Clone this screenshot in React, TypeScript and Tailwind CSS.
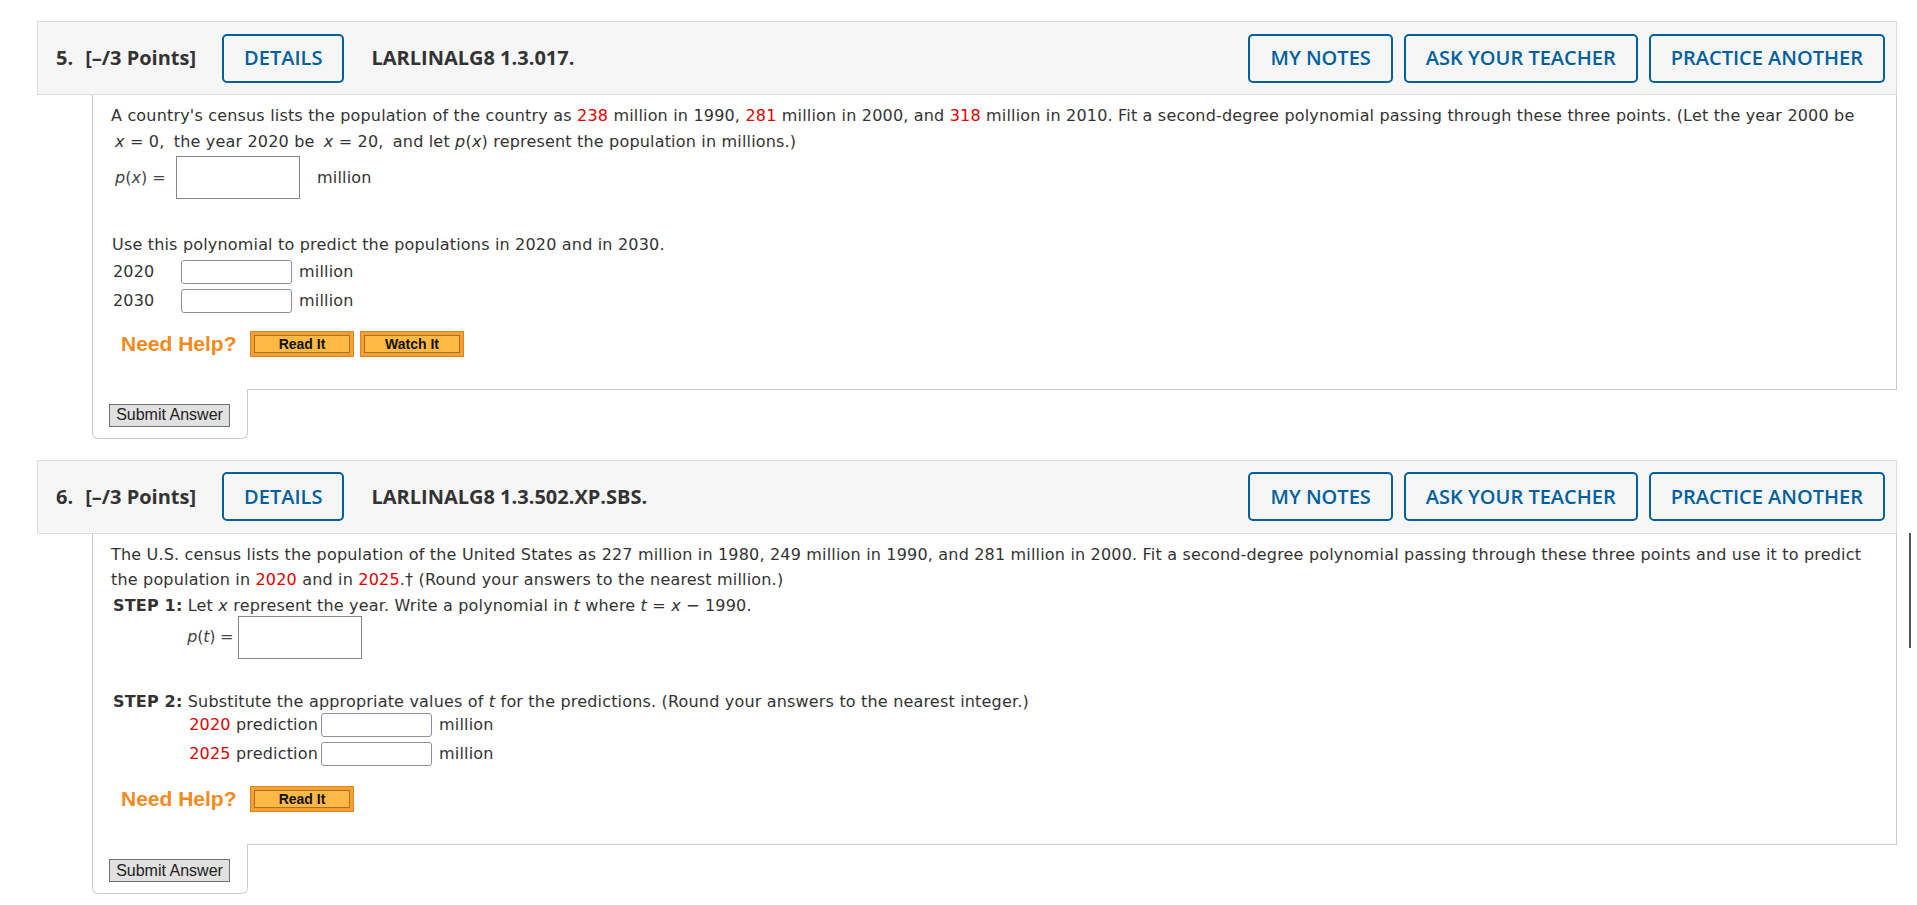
import React from "react";

const RED = "text-[#e00000]";

function HeaderButton({ children }: { children: React.ReactNode }) {
  return (
    <div className="h-[49px] px-[20px] border-2 border-[#00609d] rounded-[5px] flex items-center justify-center text-[#00609d] text-[20px] font-semibold whitespace-nowrap">
      {children}
    </div>
  );
}

function Header({ num, code }: { num: string; code: string }) {
  return (
    <div className="h-[74px] border border-[#dddddd] bg-[#f6f6f6] flex items-center pl-[18px] pr-[11px] font-['Open_Sans',sans-serif] text-[#333333] tracking-normal">
      <span className="text-[20px] font-bold">{num}</span>
      <span className="text-[20px] font-bold ml-[12px]">[–/3 Points]</span>
      <div className="ml-[26px]">
        <HeaderButton>DETAILS</HeaderButton>
      </div>
      <span className="text-[20px] font-bold ml-[27px]">{code}</span>
      <div className="ml-auto flex gap-[11px]">
        <HeaderButton>MY NOTES</HeaderButton>
        <HeaderButton>ASK YOUR TEACHER</HeaderButton>
        <HeaderButton>PRACTICE ANOTHER</HeaderButton>
      </div>
    </div>
  );
}

function HelpButton({ children }: { children: React.ReactNode }) {
  return (
    <div className="w-[104px] h-[26px] bg-[#f5a033] border border-[#de851f] p-[3px]">
      <div className="h-full border border-[#a8702a] bg-[#fdb944] flex items-center justify-center text-[14px] font-bold text-[#111] font-['Liberation_Sans',Arial,sans-serif] leading-none tracking-normal">
        {children}
      </div>
    </div>
  );
}

function NeedHelp({ watch }: { watch?: boolean }) {
  return (
    <div className="flex items-center h-[26px] pl-[10px]">
      <span className="text-[21px] font-bold text-[#f38a1d] font-['Liberation_Sans',Arial,sans-serif] w-[129px] tracking-normal">
        Need Help?
      </span>
      <div className="flex gap-[6px]">
        <HelpButton>Read It</HelpButton>
        {watch && <HelpButton>Watch It</HelpButton>}
      </div>
    </div>
  );
}

function SubmitTab() {
  return (
    <div className="flex">
      <div className="w-[156px] h-[50px] border-x border-b border-[#cccccc] rounded-b-[6px] pl-[16px] pt-[15px]">
        <div className="w-[121px] h-[23px] bg-[#e1e1e1] border border-[#707070] flex items-center justify-center text-[16px] text-[#222] font-['Liberation_Sans',Arial,sans-serif] leading-none tracking-normal">
          Submit Answer
        </div>
      </div>
      <div className="flex-1 border-t border-[#cccccc]" />
    </div>
  );
}

function SmallInput() {
  return <div className="w-[111px] h-[24px] border border-[#8f8f9d] rounded-[3px] bg-white shrink-0" />;
}

function BigInput() {
  return <div className="w-[124px] h-[43px] border border-[#888888] bg-white shrink-0" />;
}

function Math({ children }: { children: React.ReactNode }) {
  return <span className="inline-block px-[4px] whitespace-nowrap">{children}</span>;
}

export default function App() {
  return (
    <div className="min-h-[905px] w-full bg-white relative font-['DejaVu_Sans',Verdana,sans-serif] text-[16px] leading-[25.6px] text-[#333333] tracking-[0.18px]">
      <div className="pt-[21px] pl-[37px] pr-[20px]">
        {/* Question 5 */}
        <div>
          <Header num="5." code="LARLINALG8 1.3.017." />
          <div className="ml-[55px]">
            <div className="border-x border-[#cccccc] pl-[18px] pr-[16px] pt-[8px] pb-[32px]">
              <div>
                A country's census lists the population of the country as <span className={RED}>238</span> million in 1990,{" "}
                <span className={RED}>281</span> million in 2000, and <span className={RED}>318</span> million in 2010. Fit a
                second-degree polynomial passing through these three points. (Let the year 2000 be{" "}
                <Math>
                  <i>x</i> = 0,
                </Math>{" "}
                the year 2020 be{" "}
                <Math>
                  <i>x</i> = 20,
                </Math>{" "}
                and let <i>p</i>(<i>x</i>) represent the population in millions.)
              </div>
              <div className="flex items-center h-[43px] mt-[2px] pl-[4px]">
                <span className="w-[61px] text-[#444] whitespace-nowrap tracking-normal">
                  <i>p</i>(<i>x</i>) =
                </span>
                <BigInput />
                <span className="ml-[17px]">million</span>
              </div>
              <div className="mt-[33px] pl-[1px]">Use this polynomial to predict the populations in 2020 and in 2030.</div>
              <div className="flex items-center h-[29px]">
                <span className="w-[70px] pl-[2px]">2020</span>
                <SmallInput />
                <span className="ml-[7px]">million</span>
              </div>
              <div className="flex items-center h-[29px]">
                <span className="w-[70px] pl-[2px]">2030</span>
                <SmallInput />
                <span className="ml-[7px]">million</span>
              </div>
              <div className="mt-[15px]">
                <NeedHelp watch />
              </div>
            </div>
            <SubmitTab />
          </div>
        </div>

        {/* Question 6 */}
        <div className="mt-[21px]">
          <Header num="6." code="LARLINALG8 1.3.502.XP.SBS." />
          <div className="ml-[55px]">
            <div className="border-x border-[#cccccc] pl-[18px] pr-[16px] pt-[8px] pb-[32px]">
              <div>
                The U.S. census lists the population of the United States as 227 million in 1980, 249 million in 1990, and 281
                million in 2000. Fit a second-degree polynomial passing through these three points and use it to predict the
                population in <span className={RED}>2020</span> and in <span className={RED}>2025</span>.† (Round your answers to
                the nearest million.)
              </div>
              <div className="pl-[2px]">
                <b>STEP 1:</b> Let <i>x</i> represent the year. Write a polynomial in <i>t</i> where <i>t</i> = <i>x</i> − 1990.
              </div>
              <div className="flex items-center h-[43px] mt-[-3px]">
                <span className="w-[127px] pr-[5px] text-right text-[#444] whitespace-nowrap tracking-[-0.3px]">
                  <i>p</i>(<i>t</i>) =
                </span>
                <BigInput />
              </div>
              <div className="mt-[30px] pl-[2px]">
                <b>STEP 2:</b> Substitute the appropriate values of <i>t</i> for the predictions. (Round your answers to the
                nearest integer.)
              </div>
              <div className="flex items-center h-[29px] mt-[-4px]">
                <span className="w-[210px] text-right pr-[3px] whitespace-nowrap">
                  <span className={RED}>2020</span> prediction
                </span>
                <SmallInput />
                <span className="ml-[7px]">million</span>
              </div>
              <div className="flex items-center h-[29px]">
                <span className="w-[210px] text-right pr-[3px] whitespace-nowrap">
                  <span className={RED}>2025</span> prediction
                </span>
                <SmallInput />
                <span className="ml-[7px]">million</span>
              </div>
              <div className="mt-[18px]">
                <NeedHelp />
              </div>
            </div>
            <SubmitTab />
          </div>
        </div>
      </div>
      <div className="absolute left-[1909px] top-[533px] w-[2px] h-[115px] bg-[#555]" />
    </div>
  );
}
